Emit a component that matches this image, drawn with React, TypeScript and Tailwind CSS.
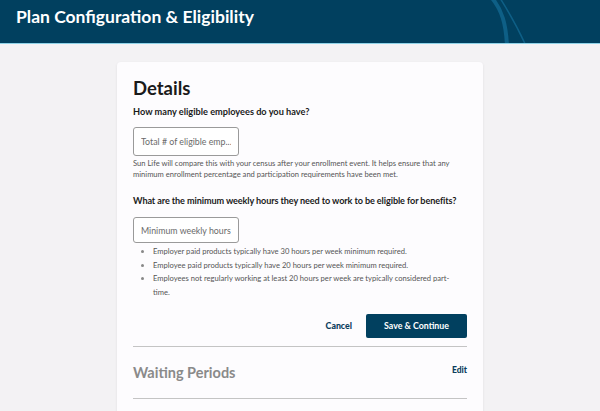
import React from "react";

const bullets = [
  "Employer paid products typically have 30 hours per week minimum required.",
  "Employee paid products typically have 20 hours per week minimum required.",
  "Employees not regularly working at least 20 hours per week are typically considered part-time.",
];

const Header = () => (
  <header className="relative h-[44px] overflow-hidden border-b border-[#8fd3e8] bg-[#01405f]">
    <h1 className="pl-4 pt-[3px] text-[17.5px] font-bold leading-[28px] text-white">
      Plan Configuration &amp; Eligibility
    </h1>
    <svg
      className="absolute left-[480px] top-0"
      width="60"
      height="44"
      viewBox="0 0 60 44"
      fill="none"
    >
      <path d="M12 -2 C22 10 26 24 27 46" stroke="#0e5f86" strokeWidth="4" />
      <path d="M20 -2 C30 14 38 28 46 46" stroke="#0e5f86" strokeWidth="1.5" />
    </svg>
  </header>
);

export default function App() {
  return (
    <div
      className="h-[411px] overflow-hidden bg-[#f3f2f4] text-[#1a1a1a]"
      style={{ fontFamily: "Lato, 'Open Sans', sans-serif" }}
    >
      <Header />
      <main className="flex justify-center pt-[18px]">
        <section className="w-[366px] rounded-[4px] bg-[#fdfcfe] px-4 pb-4 pt-[14px] shadow-[0_1px_3px_rgba(0,0,0,0.08)]">
          <h2 className="text-[18.5px] font-bold leading-[24px]">Details</h2>

          <p className="mt-[5px] text-[9.2px] font-bold leading-[14px]">
            How many eligible employees do you have?
          </p>
          <input
            className="mt-[8px] h-[29px] w-[106px] rounded-[3px] border border-[#9a9a9a] bg-white px-[7px] text-[8.8px] outline-none placeholder:text-[#6a6a6a]"
            placeholder="Total # of eligible emp..."
          />
          <p className="mt-[2px] text-[7.6px] leading-[11px] text-[#555]">
            Sun Life will compare this with your census after your enrollment event. It helps ensure that any
            minimum enrollment percentage and participation requirements have been met.
          </p>

          <p className="mt-[14px] whitespace-nowrap text-[9.1px] font-bold leading-[14px] tracking-[-0.1px]">
            What are the minimum weekly hours they need to work to be eligible for benefits?
          </p>
          <input
            className="mt-[9px] h-[26px] w-[106px] rounded-[3px] border border-[#9a9a9a] bg-white px-[7px] text-[8.8px] outline-none placeholder:text-[#6a6a6a]"
            placeholder="Minimum weekly hours"
          />
          <ul className="mt-[2px] list-disc pl-[20px] pr-[8px] text-[7.6px] leading-[13.5px] text-[#555] marker:text-[#888]">
            {bullets.map((b) => (
              <li key={b}>{b}</li>
            ))}
          </ul>

          <div className="mt-[15px] flex items-center justify-end gap-[14px]">
            <button className="text-[8.8px] font-black text-[#0b3d5c]">Cancel</button>
            <button className="h-[24px] w-[101px] rounded-[2px] bg-[#01405f] text-[8.8px] font-bold text-white">
              Save &amp; Continue
            </button>
          </div>

          <div className="mt-[8px] border-t border-[#c4c4c4]" />
          <div className="flex h-[51px] items-center justify-between">
            <h3 className="text-[14.5px] font-bold leading-[22px] text-[#8a8a8a]">Waiting Periods</h3>
            <span className="-mt-[5px] text-[8.5px] font-black text-[#0b3d5c]">Edit</span>
          </div>
          <div className="border-t border-[#c4c4c4]" />
        </section>
      </main>
    </div>
  );
}
